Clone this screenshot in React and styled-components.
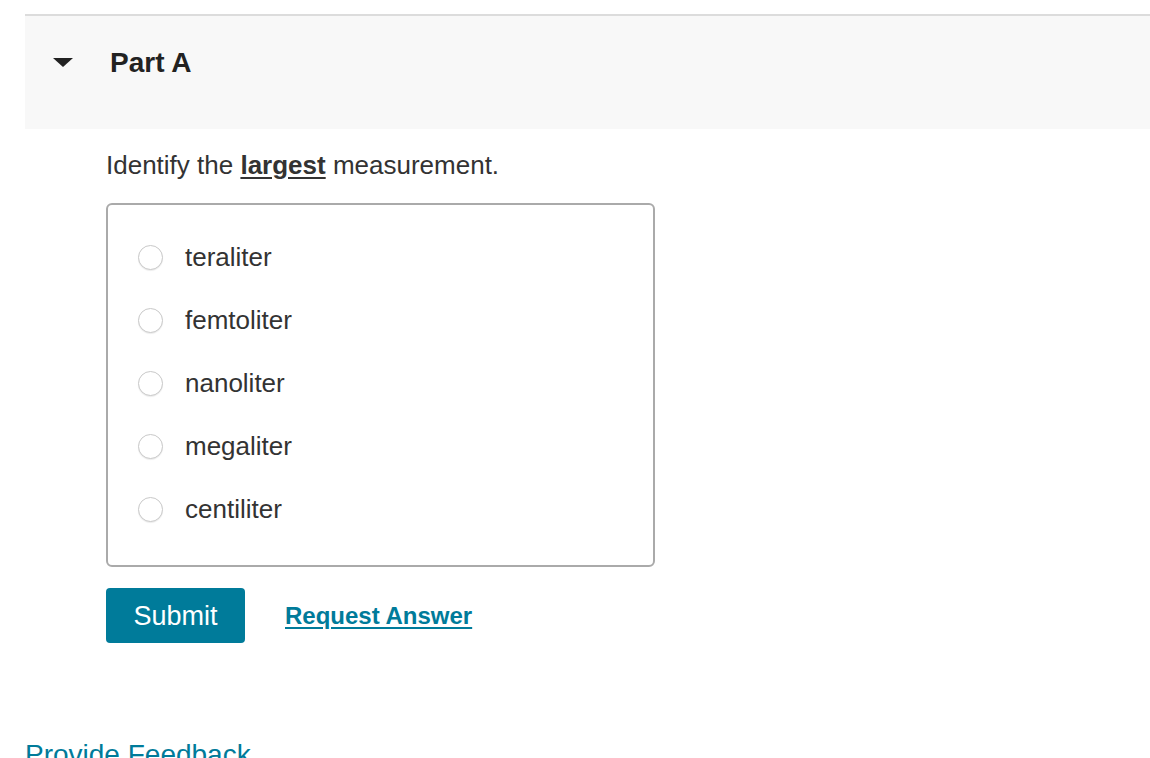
import React, { useState } from "react";
import styled, { createGlobalStyle } from "styled-components";

const GlobalStyle = createGlobalStyle`
  html, body {
    margin: 0;
    padding: 0;
    overflow: hidden;
    background: #fff;
  }
  body {
    font-family: "Liberation Sans", Arial, Helvetica, sans-serif;
    color: #333;
  }
`;

const Page = styled.div`
  padding: 14px 0 0 25px;
`;

const PartHeader = styled.div`
  display: flex;
  align-items: center;
  height: 115px;
  padding-bottom: 20px;
  box-sizing: border-box;
  border-top: 2px solid #dcdcdc;
  background: #f8f8f8;
`;

const Caret = styled.span`
  width: 0;
  height: 0;
  margin: 0 37px 0 28px;
  border-left: 10px solid transparent;
  border-right: 10px solid transparent;
  border-top: 9px solid #222;
`;

const PartTitle = styled.h2`
  margin: 0;
  font-size: 28px;
  line-height: 32px;
  font-weight: 700;
  color: #222;
`;

const Body = styled.div`
  padding: 21px 0 0 81px;
`;

const Prompt = styled.p`
  margin: 0 0 23px;
  font-size: 26px;
  line-height: 30px;
  color: #333;

  strong {
    text-decoration: underline;
    text-underline-offset: 3px;
  }
`;

const Choices = styled.div`
  width: 549px;
  box-sizing: border-box;
  padding: 21px 0 24px 30px;
  border: 2px solid #aaa;
  border-radius: 6px;
`;

const Choice = styled.label`
  display: flex;
  align-items: center;
  height: 63px;
  gap: 22px;
  font-size: 26px;
  color: #333;
  cursor: pointer;
`;

const Radio = styled.input`
  appearance: none;
  margin: 0;
  width: 25px;
  height: 25px;
  border-radius: 50%;
  border: 1px solid #c9c9c9;
  background: #fff;
  box-shadow: 0 1px 1px rgba(0, 0, 0, 0.08);
  box-sizing: border-box;
  cursor: pointer;

  &:checked {
    background: radial-gradient(circle, #007b9a 0 5px, #fff 6px);
    border-color: #007b9a;
  }
`;

const Actions = styled.div`
  display: flex;
  align-items: center;
  gap: 40px;
  margin-top: 21px;
`;

const SubmitButton = styled.button`
  width: 139px;
  height: 55px;
  padding-top: 3px;
  border: none;
  border-radius: 4px;
  background: #007b9a;
  color: #fff;
  font-family: inherit;
  font-size: 27px;
  cursor: pointer;
`;

const TextLink = styled.a`
  color: #007b9a;
  font-size: ${(p) => (p.$bold ? "24px" : "28px")};
  font-weight: ${(p) => (p.$bold ? 700 : 400)};
  text-decoration: ${(p) => (p.$bold ? "underline" : "none")};
  text-underline-offset: 3px;
  cursor: pointer;
`;

const Feedback = styled.div`
  margin-top: 95px;
  line-height: 34px;
`;

const options = ["teraliter", "femtoliter", "nanoliter", "megaliter", "centiliter"];

const App = () => {
  const [answer, setAnswer] = useState("");

  return (
    <Page>
      <GlobalStyle />
      <PartHeader>
        <Caret />
        <PartTitle>Part A</PartTitle>
      </PartHeader>

      <Body>
        <Prompt>
          Identify the <strong>largest</strong> measurement.
        </Prompt>

        <Choices>
          {options.map((item) => (
            <Choice key={item}>
              <Radio
                type="radio"
                name="partA"
                value={item}
                checked={answer === item}
                onChange={() => setAnswer(item)}
              />
              {item}
            </Choice>
          ))}
        </Choices>

        <Actions>
          <SubmitButton>Submit</SubmitButton>
          <TextLink $bold>Request Answer</TextLink>
        </Actions>
      </Body>

      <Feedback>
        <TextLink>Provide Feedback</TextLink>
      </Feedback>
    </Page>
  );
};

export default App;
